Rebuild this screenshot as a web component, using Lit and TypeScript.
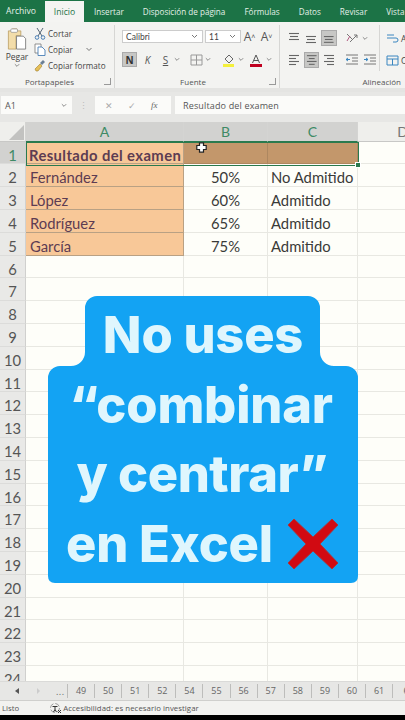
import { LitElement, html, css, svg } from "lit";
import { customElement } from "lit/decorators.js";

const tabs = ["Archivo", "Inicio", "Insertar", "Disposición de página", "Fórmulas", "Datos", "Revisar", "Vista"];
const sheets = ["49", "50", "51", "52", "54", "55", "56", "57", "58", "59", "60", "61", "6"];
type Row = { a: string; b: string; c: string };
const data: Row[] = [
  { a: "Fernández", b: "50%", c: "No Admitido" },
  { a: "López", b: "60%", c: "Admitido" },
  { a: "Rodríguez", b: "65%", c: "Admitido" },
  { a: "García", b: "75%", c: "Admitido" },
];
const rowNums = Array.from({ length: 24 }, (_, i) => i + 1);

const caret = (w = 7) => html`<svg class="caret" width=${w} height="5" viewBox="0 0 7 5"><path d="M1 1l2.500 2.500L6 1" fill="none" stroke="#777" stroke-width="1"/></svg>`;

const lines = (ys: [number, number][]) => html`<svg width="14" height="14" viewBox="0 0 14 14">${ys.map(([x, w], i) => svg`<path d="M${x} ${2.5 + i * 3}h${w}" stroke="#666" stroke-width="1.1"/>`)}</svg>`;

const sp = (w: number) => html`<div style="width:${w}px;flex:none"></div>`;

@customElement("app-root")
export class AppRoot extends LitElement {
  static styles = css`
    :host { display: block; width: 405px; height: 720px; background: #000; overflow: hidden; position: relative; font-family: "Open Sans", "Liberation Sans", sans-serif; }
    .tabs { height: 22px; background: #1c7346; display: flex; align-items: stretch; color: #e4f0e8; font-size: 8.150px; white-space: nowrap; overflow: hidden; }
    .tab { display: flex; align-items: center; padding-left: 6px; margin-right: 13px; flex: none; }
    .tab:first-child { width: 39px; box-sizing: border-box; margin-right: 6px; font-size: 8.600px; }
    .tab.on { background: #f4f4f2; color: #1c7346; width: 39px; box-sizing: border-box; justify-content: center; padding: 0; margin: 1px 4px 0 0; font-size: 8.600px; }

    .ribbon { height: 66px; background: #f3f3f1; display: flex; color: #444; font-size: 8.500px; border-bottom: 4px solid #e4e4e2; overflow: hidden; }
    .group { display: flex; flex-direction: column; flex: none; border-right: 1px solid #d6d6d4; margin-top: 3px; box-sizing: border-box; }
    .group .body { flex: 1; display: flex; min-height: 0; }
    .glabel { height: 13px; line-height: 13px; text-align: center; font-size: 8px; color: #555; position: relative; }
    .launch { position: absolute; right: 3px; top: 3px; width: 6px; height: 6px; border: 1px solid #999; border-width: 0 1px 1px 0; }
    .clip { width: 115px; }
    .clip .glabel { padding-right: 15px; }
    .paste { width: 34px; padding: 3px 0 0 0; display: flex; flex-direction: column; align-items: center; flex: none; }
    .paste span { line-height: 10px; margin-top: 1px; margin-bottom: 1px; }
    .clip-list { display: flex; flex-direction: column; }
    .clip-item { height: 16px; display: flex; align-items: center; gap: 2px; white-space: nowrap; font-size: 8.100px; }
    .clip-item svg:first-child { width: 12px; flex: none; }

    .font { width: 165px; padding-left: 7px; }
    .font .body { flex-direction: column; gap: 9px; padding-top: 5px; }
    .font .glabel { padding-right: 15px; }
    .frow { display: flex; align-items: center; }
    .box { height: 13px; background: #fff; border: 1px solid #ccc; display: flex; align-items: center; justify-content: space-between; padding: 0 3px; font-size: 8.500px; box-sizing: border-box; color: #444; }
    .fname { width: 81px; margin-right: 2px; font-family: Lato, sans-serif; }
    .fsize { width: 36px; margin-right: 0; font-family: Lato, sans-serif; }
    .grow { font-size: 12px; width: 17px; text-align: center; color: #555; line-height: 13px; flex: none; }
    .grow small { font-size: 7px; vertical-align: top; }
    .tbtn { width: 15px; height: 15px; display: flex; align-items: center; justify-content: center; font-size: 10px; color: #555; flex: none; }
    .tbtn.press { background: #c7c7c5; border: 1px solid #aaa; box-sizing: border-box; font-weight: 700; color: #333; }
    .tbtn.it { font-style: italic; }
    .tbtn.un { text-decoration: underline; }
    .mr { margin-right: 3px; }

    .align { width: 100px; padding-left: 6px; border-right: none; }
    .align .body { flex-direction: column; gap: 6px; padding-top: 5px; }
    .arow { display: flex; align-items: center; gap: 2px; }
    .abtn { width: 15.500px; height: 16px; display: flex; align-items: center; justify-content: center; flex: none; }
    .abtn.press { background: #c7c7c5; border: 1px solid #aaa; box-sizing: border-box; }
    .gap { width: 4px; flex: none; }
    .align .glabel { text-align: right; margin-right: -21px; white-space: nowrap; }
    .wrap { display: flex; flex-direction: column; gap: 9px; padding: 7px 0 0 6px; font-size: 8.500px; white-space: nowrap; }
    .wrap div { display: flex; align-items: center; gap: 2px; }
    .wrapwrap { border-left: 1px solid #d6d6d4; margin: 3px 0 17px -1px; flex: none; }

    .fbar { height: 30px; background: #e7e7e5; display: flex; align-items: center; padding: 0 0 4px 1px; box-sizing: border-box; }
    .name { width: 71px; height: 18px; background: #fbfbf9; display: flex; align-items: center; justify-content: space-between; padding: 0 5px 0 4px; box-sizing: border-box; font-size: 9px; color: #555; flex: none; }
    .dots { width: 23px; display: flex; justify-content: center; color: #bbb; font-size: 9px; flex: none; }
    .fxbox { width: 76px; height: 18px; background: #fbfbf9; display: flex; align-items: center; justify-content: space-around; padding: 0 6px 0 3px; box-sizing: border-box; flex: none; color: #aaa; font-size: 9px; }
    .fx { font-family: "Liberation Serif", serif; font-style: italic; color: #666; }
    .ftext { flex: 1; margin-left: 4px; height: 18px; background: #fbfbf9; display: flex; align-items: center; padding-left: 8px; font-size: 9px; color: #555; letter-spacing: 0.150px; }

    .sheet { height: 559px; background: #fefef9; overflow: hidden; position: relative; font-family: Lato, "Open Sans", sans-serif; font-size: 14.800px; }
    .grid { display: grid; grid-template-columns: 26px 158px 84px 90px 90px; grid-auto-rows: 22.800px; }
    .grid.head { grid-auto-rows: 19.700px; }
    .hc { background: #efefec; display: flex; align-items: center; justify-content: center; color: #777; border-right: 1px solid #d4d4d2; border-bottom: 1px solid #c8c8c6; box-sizing: border-box; font-size: 14px; }
    .hc.sel { background: #d2d2d0; color: #3e8a65; border-bottom: 1px solid #2a7a4e; }
    .rn { background: #e9e9e7; color: #555; display: flex; align-items: center; justify-content: center; padding-top: 4px; border-right: 1px solid #d0d0ce; border-bottom: 1px solid #dcdcda; box-sizing: border-box; }
    .rn.sel { background: #d2d2d0; color: #3e8a65; }
    .c { border-right: 1px solid #e8e8e2; border-bottom: 1px solid #e8e8e2; box-sizing: border-box; display: flex; align-items: center; padding: 4px 3px 0; white-space: nowrap; color: #3a3a38; overflow: hidden; }
    .c.or { background: #f8c898; color: #5d3c52; padding-left: 4px; border-color: #b9a184; }
    .c.t { font-weight: 700; letter-spacing: 0.400px; padding-left: 3px; }
    .c.dk { background: #c3976b; border-color: #ad8760; }
    .c.ct { justify-content: center; }
    .tri { width: 0; height: 0; border-style: solid; border-width: 0 0 15px 15px; border-color: transparent transparent #c2c2c0 transparent; align-self: end; margin: 0 1px 1px auto; }

    .selbox { position: absolute; left: 26px; top: 20px; width: 333px; height: 24px; border: 1.500px solid #2a7a4e; box-sizing: border-box; pointer-events: none; }
    .handle { position: absolute; right: -3px; bottom: -3px; width: 4px; height: 4px; background: #2a7a4e; border: 1px solid #fff; }
    .cursor { position: absolute; left: 196px; top: 20px; }

    .notice { position: absolute; left: 48px; top: 174px; width: 310px; height: 288px; }
    .notice svg.bg { position: absolute; inset: 0; }
    .txt { position: absolute; inset: 0; display: flex; flex-direction: column; align-items: center; padding-top: 4px; font-family: Inter, "Open Sans", sans-serif; font-weight: 800; font-size: 50.600px; color: #dff6fd; white-space: nowrap; letter-spacing: -0.200px; }
    .line { display: flex; align-items: center; gap: 14px; height: 69.700px; line-height: 69.700px; }
    .line.l2 { margin-right: 4px; }
    .line.l3 { margin-right: 2px; letter-spacing: -0.400px; }
    .line.l4 { margin-right: 1px; }
    .txt svg { flex: none; }

    .sheetbar { height: 20px; background: #e7e7e5; display: flex; align-items: center; font-size: 9px; color: #666; overflow: hidden; border-top: 1px solid #dadad8; box-sizing: border-box; border-bottom: 1px solid #cfcfcd; }
    .nav { width: 67px; flex: none; display: flex; align-items: center; box-sizing: border-box; padding-left: 15px; height: 100%; }
    .nav i { width: 0; height: 0; border-style: solid; border-width: 3px 4px 3px 0; border-color: transparent #555 transparent transparent; margin-right: 18px; }
    .nav i.r { border-width: 3px 0 3px 3px; border-color: transparent transparent transparent #ccc; margin-right: 16px; }
    .nav span { letter-spacing: 0.500px; }
    .st { width: 27.100px; flex: none; text-align: center; border-left: 1px solid #bdbdbb; box-sizing: border-box; line-height: 14px; }
    .status { height: 14px; background: #f2f2f0; display: flex; align-items: center; font-size: 7.800px; color: #555; padding-left: 2px; gap: 30px; }
    .acc { display: flex; align-items: center; gap: 1px; letter-spacing: 0.050px; white-space: nowrap; }
    .black { height: 5px; background: #000; }
  `;

  render() {
    return html`
      <div class="tabs">
        ${tabs.map((t, i) => html`<div class="tab ${i === 1 ? "on" : ""}">${t}</div>`)}
      </div>
      <div class="ribbon">
        <div class="group clip">
          <div class="body">
            <div class="paste">
              <svg width="22" height="23" viewBox="0 0 22 24"><path d="M2 3h4V1h5v2h4v5H10v14H2z" fill="#f3ddaa" stroke="#b79a5e" stroke-width=".8"/><rect x="4.500" y="1" width="7" height="3.500" rx="1" fill="#fff" stroke="#8a8a8a" stroke-width=".7"/><path d="M10.500 8.500h7l2.500 2.500v11h-9.500z" fill="#fff" stroke="#777" stroke-width=".9"/></svg>
              <span>Pegar</span>
              ${caret(6)}
            </div>
            <div class="clip-list">
              <div class="clip-item"><svg height="13" viewBox="0 0 12 13"><path d="M3 1l5 8M9 1L4 9" stroke="#567" stroke-width="1" fill="none"/><circle cx="3" cy="10.500" r="1.800" fill="none" stroke="#4a7fb5"/><circle cx="9" cy="10.500" r="1.800" fill="none" stroke="#4a7fb5"/></svg>Cortar</div>
              <div class="clip-item"><svg height="13" viewBox="0 0 12 13"><path d="M1 1h6v9H1z" fill="#fff" stroke="#777" stroke-width=".8"/><path d="M4 4h4l3 3v5.500H4z" fill="#fff" stroke="#4a7fb5" stroke-width=".9"/></svg>Copiar <span style="margin-left:8px;display:flex">${caret(6)}</span></div>
              <div class="clip-item"><svg height="13" viewBox="0 0 12 13"><path d="M1 10l5-5 2 2-4 5H2z" fill="#e6bf58" stroke="#a08030" stroke-width=".6"/><path d="M6 4l3-3 2 2-3 3z" fill="#6a7f95"/></svg>Copiar formato</div>
            </div>
          </div>
          <div class="glabel">Portapapeles<span class="launch"></span></div>
        </div>

        <div class="group font">
          <div class="body">
            <div class="frow">
              <div class="box fname">Calibri${caret(9)}</div>
              <div class="box fsize">11${caret(9)}</div>
              <div class="grow">A<small>˄</small></div>
              <div class="grow">A<small>˅</small></div>
            </div>
            <div class="frow">
              <div class="tbtn press mr">N</div>
              <div class="tbtn it mr">K</div>
              <div class="tbtn un">S</div>
              ${sp(1)}${caret(6)}
              ${sp(9)}
              <div class="tbtn"><svg width="13" height="12" viewBox="0 0 13 12"><path d="M1 1h11v10H1zM6.500 1v10M1 6h11" fill="none" stroke="#999"/></svg></div>
              ${sp(1)}${caret(6)}
              ${sp(10)}
              <div class="tbtn"><svg width="14" height="14" viewBox="0 0 14 14"><path d="M3 6l4-4 4 4-4 4z" fill="none" stroke="#666"/><rect x="1" y="11" width="11" height="3" fill="#f4f03c"/></svg></div>
              ${sp(1.5)}${caret(6)}
              ${sp(4.5)}
              <div class="tbtn"><svg width="14" height="14" viewBox="0 0 14 14"><path d="M3.500 10L7 2l3.500 8M5 7.500h4" fill="none" stroke="#555"/><rect x="1" y="11" width="12" height="3" fill="#c00020"/></svg></div>
              ${sp(2.5)}${caret(6)}
            </div>
          </div>
          <div class="glabel">Fuente<span class="launch"></span></div>
        </div>

        <div class="group align">
          <div class="body">
            <div class="arow">
              <div class="abtn">${lines([[2, 10], [3, 8], [2, 10]])}</div>
              <div class="abtn">${lines([[0, 0], [2, 10], [3, 8], [2, 10]])}</div>
              <div class="abtn press">${lines([[0, 0], [2, 10], [3, 8], [2, 10]])}</div>
              <div class="gap"></div>
              <div class="abtn"><svg width="14" height="14" viewBox="0 0 14 14"><path d="M2 3l5 5M5 11l7-7M12 4h-3M12 4v3" fill="none" stroke="#777"/><path d="M2 10l3-5" stroke="#b05a80"/></svg></div>
              ${caret(6)}
            </div>
            <div class="arow">
              <div class="abtn">${lines([[2, 10], [2, 7], [2, 10], [2, 7]])}</div>
              <div class="abtn press">${lines([[2, 10], [4, 6], [2, 10], [4, 6]])}</div>
              <div class="abtn">${lines([[2, 10], [5, 7], [2, 10], [5, 7]])}</div>
              <div class="gap"></div>
              <div class="abtn"><svg width="14" height="14" viewBox="0 0 14 14"><path d="M1 2h12M7 5h6M7 8h6M1 11h12" stroke="#777"/><path d="M5 6.500H1M3 5L1 6.500 3 8" fill="none" stroke="#3a86c0"/></svg></div>
              <div class="abtn"><svg width="14" height="14" viewBox="0 0 14 14"><path d="M1 2h12M7 5h6M7 8h6M1 11h12" stroke="#777"/><path d="M1 6.500h4M3 5l2 1.500L3 8" fill="none" stroke="#3a86c0"/></svg></div>
            </div>
          </div>
          <div class="glabel">Alineación</div>
        </div>
        <div class="wrapwrap">
          <div class="wrap">
            <div><svg width="13" height="13" viewBox="0 0 13 13"><path d="M1 3h7M1 6h9a2 2 0 010 4H7" fill="none" stroke="#3a86c0"/></svg>Aj</div>
            <div><svg width="13" height="13" viewBox="0 0 13 13"><path d="M1 2h11v9H1zM1 5h11M6.500 5v6" fill="none" stroke="#3a86c0"/></svg>Co</div>
          </div>
        </div>
      </div>

      <div class="fbar">
        <div class="name">A1 ${caret(6)}</div>
        <div class="dots">⋮</div>
        <div class="fxbox"><span>✕</span><span>✓</span><span class="fx">fx</span></div>
        <div class="ftext">Resultado del examen</div>
      </div>

      <div class="sheet">
        <div class="grid head">
          <div class="hc"><div class="tri"></div></div>
          <div class="hc sel">A</div>
          <div class="hc sel">B</div>
          <div class="hc sel">C</div>
          <div class="hc">D</div>
        </div>
        <div class="grid">
          ${rowNums.map((n) => this.row(n))}
        </div>
        <div class="selbox"><div class="handle"></div></div>
        <svg class="cursor" width="11" height="11" viewBox="0 0 11 11"><path d="M3.500 .8h4v2.700h2.700v4H7.500v2.700h-4V7.500H.8v-4h2.700z" fill="#fff" stroke="#222" stroke-width="1.200"/></svg>

        <div class="notice">
          <svg class="bg" width="310" height="288" viewBox="0 0 310 288">
            <path fill="#13a3f3" d="M37 12a12 12 0 0 1 12-12H260a12 12 0 0 1 12 12V56a14 14 0 0 0 14 14h12a12 12 0 0 1 12 12V280q0 7-7 7H7q-7 0-7-7V82a12 12 0 0 1 12-12H23a14 14 0 0 0 14-14z"/>
          </svg>
          <div class="txt">
            <div class="line">No uses</div>
            <div class="line l2">“combinar</div>
            <div class="line l3">y centrar”</div>
            <div class="line l4">en Excel
              <svg width="52" height="52" viewBox="0 0 52 52"><path d="M7 1L26 19 45 1l6 6L33 26l18 19-6 6L26 33 7 51l-6-6L19 26 1 7z" fill="#d10a12" stroke="#a8353d" stroke-width="1"/></svg>
            </div>
          </div>
        </div>
      </div>

      <div class="sheetbar">
        <div class="nav"><i></i><i class="r"></i><span>...</span></div>
        ${sheets.map((s) => html`<div class="st">${s}</div>`)}
      </div>
      <div class="status">
        <span>Listo</span>
        <span class="acc"><svg width="13" height="12" viewBox="0 0 13 12"><circle cx="6" cy="6" r="4.500" fill="none" stroke="#999" stroke-dasharray="5 2"/><path d="M6 4.500v3M3.500 4.500h5M4.500 10L6 7.500 7.500 10" fill="none" stroke="#333"/><path d="M9 8l3 3M12 8l-3 3" stroke="#333"/></svg>Accesibilidad: es necesario investigar</span>
      </div>
      <div class="black"></div>
    `;
  }

  private row(n: number) {
    const d = n >= 2 && n <= 5 ? data[n - 2] : null;
    const sel = n === 1;
    return html`
      <div class="rn ${sel ? "sel" : ""}">${n}</div>
      ${sel
        ? html`<div class="c or t">Resultado del examen</div><div class="c dk"></div><div class="c dk"></div>`
        : d
        ? html`<div class="c or">${d.a}</div><div class="c ct">${d.b}</div><div class="c">${d.c}</div>`
        : html`<div class="c"></div><div class="c"></div><div class="c"></div>`}
      <div class="c"></div>
    `;
  }
}
